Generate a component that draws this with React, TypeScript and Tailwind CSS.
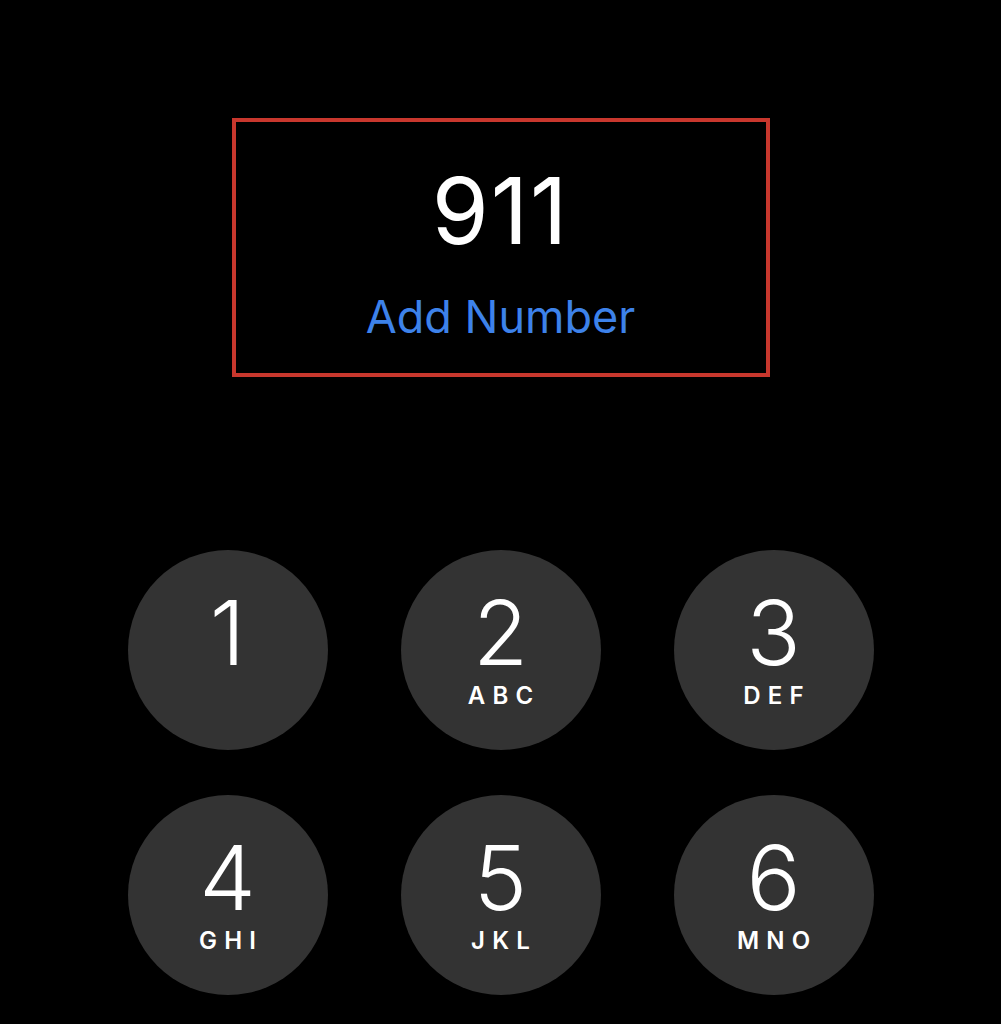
import React from 'react';

type Key = { digit: string; letters?: string };

const keys: Key[] = [
  { digit: '1' },
  { digit: '2', letters: 'ABC' },
  { digit: '3', letters: 'DEF' },
  { digit: '4', letters: 'GHI' },
  { digit: '5', letters: 'JKL' },
  { digit: '6', letters: 'MNO' },
];

const KeyButton: React.FC<{ k: Key }> = ({ k }) => (
  <button className="w-[200px] h-[200px] rounded-full bg-[#333333] flex flex-col items-center pt-[38px] text-white">
    <span className="text-[90px] leading-none font-light">{k.digit}</span>
    {k.letters && (
      <span className="mt-[6px] text-[24px] leading-none font-semibold tracking-[0.3em] pl-[0.3em]">
        {k.letters}
      </span>
    )}
  </button>
);

const App: React.FC = () => {
  return (
    <div className="w-full h-[1024px] bg-black overflow-hidden font-['Inter',sans-serif] flex flex-col items-center pt-[118px]">
      <div className="w-[538px] h-[259px] border-[4px] border-[#c8372d] flex flex-col items-center pt-[43px]">
        <div className="text-white text-[92px] leading-none font-normal tracking-[0.02em]">911</div>
        <div className="mt-[37px] text-[#3d82ea] text-[45px] leading-none font-normal">Add Number</div>
      </div>
      <div className="mt-[173px] grid grid-cols-3 gap-x-[73px] gap-y-[45px]">
        {keys.map((k) => (
          <KeyButton key={k.digit} k={k} />
        ))}
      </div>
    </div>
  );
};

export default App;
